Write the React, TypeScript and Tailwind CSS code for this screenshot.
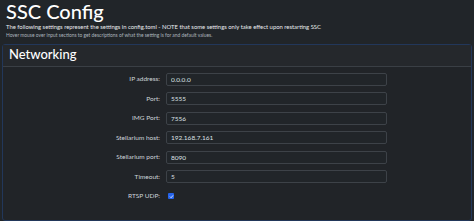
const rows = [
  { label: "IP address:", value: "0.0.0.0" },
  { label: "Port:", value: "5555" },
  { label: "IMG Port:", value: "7556" },
  { label: "Stellarium host:", value: "192.168.7.161" },
  { label: "Stellarium port:", value: "8090" },
  { label: "Timeout:", value: "5" },
]

export default function App() {
  return (
    <div className="w-[474px] h-[221px] overflow-hidden bg-[#212529] text-[#dee2e6] font-['Lato','Open_Sans',sans-serif]">
      <div className="px-[6px]">
        <h1 className="text-[20px] leading-[22px] font-medium text-white">SSC Config</h1>
        <p className="text-[5.9px] leading-[9px] text-[#e9ecef]">
          The following settings represent the settings in config.toml - NOTE that some settings only take effect upon restarting SSC
        </p>
        <p className="text-[4.9px] leading-[8px] text-[#adb5bd]">
          Hover mouse over input sections to get descriptions of what the setting is for and default values.
        </p>
      </div>

      <div className="mx-[2px] mt-[4.5px] border border-[#22375a] rounded-[3px] bg-[#212428]">
        <div className="px-[6px] h-[22px] flex items-center border-b border-[#3a3f45] bg-[#25282c]">
          <h2 className="text-[13px] font-medium text-white">Networking</h2>
        </div>
        <div className="pt-[6px] pb-[17px]">
          {rows.map((r) => (
            <div key={r.label} className="flex items-center h-[13px] mb-[6.5px]">
              <label className="w-[157px] text-right text-[6.5px] text-[#ced4da]">{r.label}</label>
              <input
                readOnly
                value={r.value}
                className="ml-[6px] w-[221px] h-[13px] px-[4px] text-[6.5px] text-[#dee2e6] bg-[#212529] border border-[#3d4248] rounded-[2px] outline-none"
              />
            </div>
          ))}
          <div className="flex items-center h-[13px]">
            <label className="w-[157px] text-right text-[6.5px] text-[#ced4da]">RTSP UDP:</label>
            <span className="ml-[8px] w-[6px] h-[6px] rounded-[1px] bg-[#2563eb] flex items-center justify-center">
              <svg viewBox="0 0 10 10" className="w-[5px] h-[5px]">
                <path d="M2 5.2 L4.2 7.4 L8 2.8" fill="none" stroke="white" strokeWidth="1.6" />
              </svg>
            </span>
          </div>
        </div>
      </div>
    </div>
  )
}
